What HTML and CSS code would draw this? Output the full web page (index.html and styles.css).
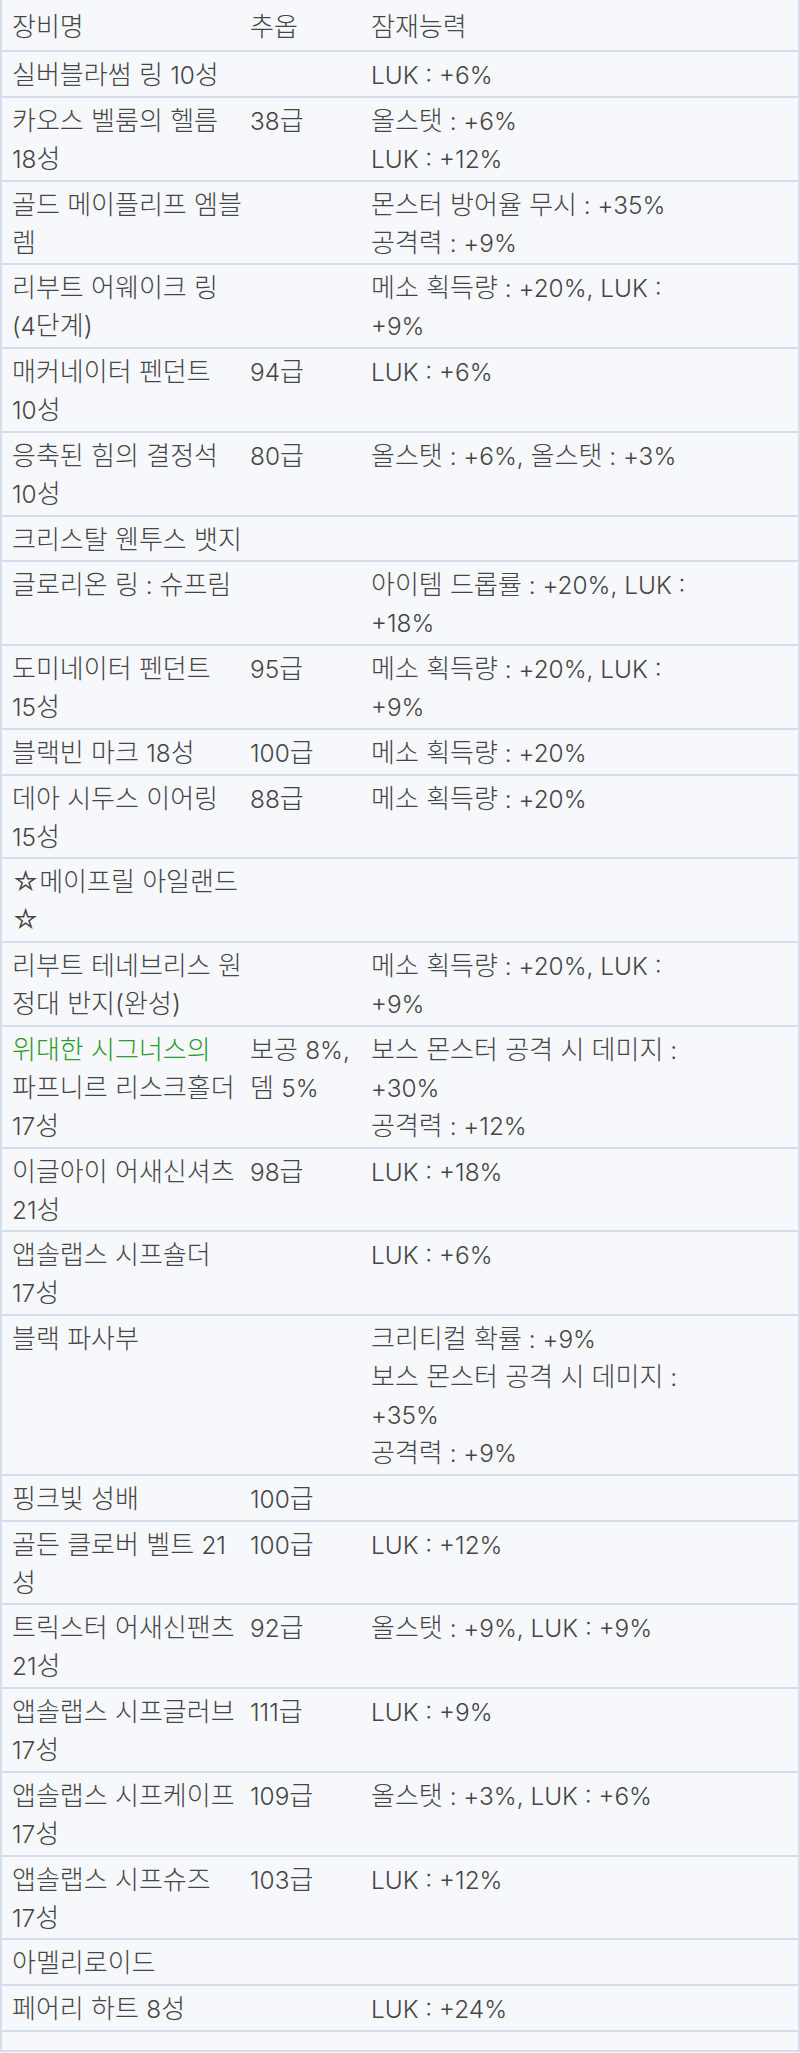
FILE: index.html
```html
<!DOCTYPE html>
<html lang="ko">
<head>
<meta charset="utf-8">
<link rel="stylesheet" href="styles.css">
</head>
<body>
<table class="equip">
  <colgroup>
    <col class="c-name">
    <col class="c-opt">
    <col class="c-pot">
  </colgroup>
  <thead>
    <tr><th>장비명</th><th>추옵</th><th>잠재능력</th></tr>
  </thead>
  <tbody>
    <tr><td>실버블라썸 링 <span class="en">10</span>&#8288;성</td><td></td><td><span class="en">LUK : +6%</span></td></tr>
    <tr><td>카오스 벨룸의 헬름 <span class="en">18</span>&#8288;성</td><td><span class="en">38</span>&#8288;급</td><td>올스탯<span class="en"> : +6%</span><br><span class="en">LUK : +12%</span></td></tr>
    <tr><td>골드 메이플리프 엠블렘</td><td></td><td>몬스터 방어율 무시<span class="en"> : +35%</span><br>공격력<span class="en"> : +9%</span></td></tr>
    <tr><td>리부트 어웨이크 링 <span class="en">(4</span>&#8288;단계)</td><td></td><td>메소 획득량<span class="en"> : +20%, LUK :</span> <span class="en">+9%</span></td></tr>
    <tr><td>매커네이터 펜던트 <span class="en">10</span>&#8288;성</td><td><span class="en">94</span>&#8288;급</td><td><span class="en">LUK : +6%</span></td></tr>
    <tr><td>응축된 힘의 결정석 <span class="en">10</span>&#8288;성</td><td><span class="en">80</span>&#8288;급</td><td>올스탯<span class="en"> : +6%, </span>올스탯<span class="en"> : +3%</span></td></tr>
    <tr><td>크리스탈 웬투스 뱃지</td><td></td><td></td></tr>
    <tr><td>글로리온 링<span class="en"> : </span>슈프림</td><td></td><td>아이템 드롭률<span class="en"> : +20%, LUK :</span> <span class="en">+18%</span></td></tr>
    <tr><td>도미네이터 펜던트 <span class="en">15</span>&#8288;성</td><td><span class="en">95</span>&#8288;급</td><td>메소 획득량<span class="en"> : +20%, LUK :</span> <span class="en">+9%</span></td></tr>
    <tr><td>블랙빈 마크 <span class="en">18</span>&#8288;성</td><td><span class="en">100</span>&#8288;급</td><td>메소 획득량<span class="en"> : +20%</span></td></tr>
    <tr><td>데아 시두스 이어링 <span class="en">15</span>&#8288;성</td><td><span class="en">88</span>&#8288;급</td><td>메소 획득량<span class="en"> : +20%</span></td></tr>
    <tr><td>☆메이프릴 아일랜드 ☆</td><td></td><td></td></tr>
    <tr><td>리부트 테네브리스 원정대 반지(완성)</td><td></td><td>메소 획득량<span class="en"> : +20%, LUK :</span> <span class="en">+9%</span></td></tr>
    <tr><td><span class="green">위대한 시그너스의</span><br>파프니르 리스크홀더 <span class="en">17</span>&#8288;성</td><td>보공 <span class="en">8%, </span>뎀 <span class="en">5%</span></td><td>보스 몬스터 공격 시 데미지<span class="en"> :</span> <span class="en">+30%</span><br>공격력<span class="en"> : +12%</span></td></tr>
    <tr><td>이글아이 어새신셔츠 <span class="en">21</span>&#8288;성</td><td><span class="en">98</span>&#8288;급</td><td><span class="en">LUK : +18%</span></td></tr>
    <tr><td>앱솔랩스 시프숄더 <span class="en">17</span>&#8288;성</td><td></td><td><span class="en">LUK : +6%</span></td></tr>
    <tr><td>블랙 파사부</td><td></td><td>크리티컬 확률<span class="en"> : +9%</span><br>보스 몬스터 공격 시 데미지<span class="en"> :</span> <span class="en">+35%</span><br>공격력<span class="en"> : +9%</span></td></tr>
    <tr><td>핑크빛 성배</td><td><span class="en">100</span>&#8288;급</td><td></td></tr>
    <tr><td>골든 클로버 벨트 <span class="en">21</span>성</td><td><span class="en">100</span>&#8288;급</td><td><span class="en">LUK : +12%</span></td></tr>
    <tr><td>트릭스터 어새신팬츠 <span class="en">21</span>&#8288;성</td><td><span class="en">92</span>&#8288;급</td><td>올스탯<span class="en"> : +9%, LUK : +9%</span></td></tr>
    <tr><td>앱솔랩스 시프글러브 <span class="en">17</span>&#8288;성</td><td><span class="en">111</span>&#8288;급</td><td><span class="en">LUK : +9%</span></td></tr>
    <tr><td>앱솔랩스 시프케이프 <span class="en">17</span>&#8288;성</td><td><span class="en">109</span>&#8288;급</td><td>올스탯<span class="en"> : +3%, LUK : +6%</span></td></tr>
    <tr><td>앱솔랩스 시프슈즈 <span class="en">17</span>&#8288;성</td><td><span class="en">103</span>&#8288;급</td><td><span class="en">LUK : +12%</span></td></tr>
    <tr><td>아멜리로이드</td><td></td><td></td></tr>
    <tr><td>페어리 하트 <span class="en">8</span>&#8288;성</td><td></td><td><span class="en">LUK : +24%</span></td></tr>
    <tr class="blank"><td></td><td></td><td></td></tr>
  </tbody>
</table>
</body>
</html>
```

FILE: styles.css
```css
html, body {
  margin: 0;
  padding: 0;
  background: #f6f8fc;
}

body {
  font-family: "Inter", "Noto Sans CJK KR", sans-serif;
  font-size: 26px;
  font-weight: 300;
  color: #454545;
}

.equip {
  width: 800px;
  border-collapse: separate;
  border-spacing: 0;
  table-layout: fixed;
  border-left: 2px solid #d3ddeb;
  border-right: 2px solid #d3ddeb;
  background: #f6f8fc;
}

.c-name { width: 242px; }
.c-opt { width: 117px; }
.c-pot { width: 437px; }

.equip th,
.equip td {
  text-align: left;
  vertical-align: top;
  line-height: 38px;
  padding: 4px 0 1.75px 10px;
  border-bottom: 2px solid #d3ddeb;
  font-weight: 300;
}

.equip td:nth-child(2),
.equip th:nth-child(2) {
  padding-left: 6px;
}

.equip td:nth-child(3),
.equip th:nth-child(3) {
  padding-right: 101px;
}

.equip th {
  padding-top: 8px;
  padding-bottom: 4px;
}

.equip .blank td {
  height: 18px;
  padding: 0;
}

.en {
  font-size: 24.4px;
  line-height: 1;
}

.green {
  color: #2c9a2c;
}
```
